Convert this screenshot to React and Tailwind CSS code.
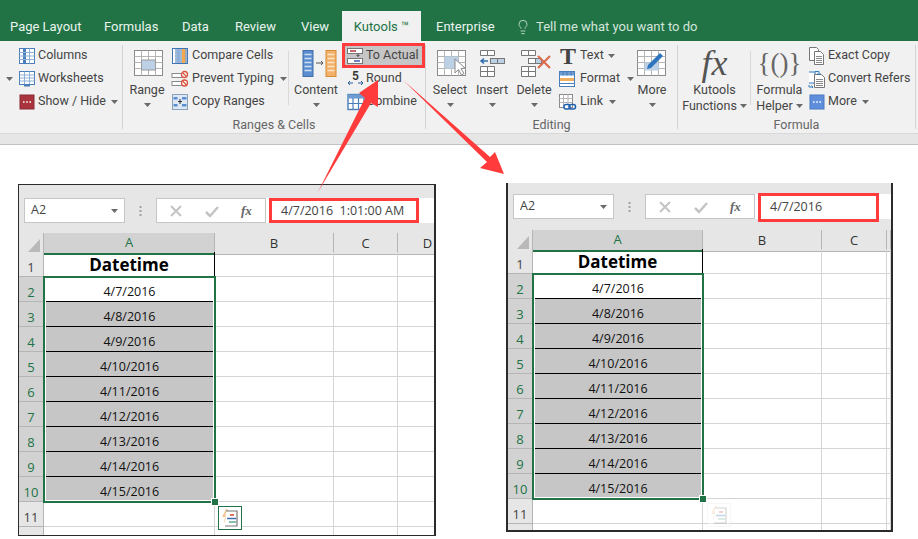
import { Lightbulb } from "lucide-react"

const ROWS = ["4/7/2016", "4/8/2016", "4/9/2016", "4/10/2016", "4/11/2016", "4/12/2016", "4/13/2016", "4/14/2016", "4/15/2016"]

function Caret({ className = "" }) {
  return (
    <svg width="7" height="4" viewBox="0 0 7 4" className={className}>
      <polygon points="0,0 7,0 3.5,4" fill="#6a6a6a" />
    </svg>
  )
}

/* ribbon icons */
function Icon({ w = 18, h = 18, className = "", children }) {
  return (
    <svg width={w} height={h} viewBox={`0 0 ${w} ${h}`} className={`shrink-0 ${className}`}>
      {children}
    </svg>
  )
}

const ColumnsIcon = () => (
  <Icon>
    <rect x="1.5" y="1.5" width="15" height="15" fill="#fff" stroke="#4a7ebb" />
    <rect x="5" y="1.5" width="3" height="15" fill="#4a7ebb" />
    <path d="M1.5 5.5h15M1.5 9h15M1.5 12.5h15M11.5 1.5v15" stroke="#8fb0d8" />
  </Icon>
)
const WorksheetsIcon = () => (
  <Icon>
    <rect x="1.5" y="1.5" width="15" height="13" fill="#fff" stroke="#4a7ebb" />
    <path d="M1.5 5h15M1.5 8h15M1.5 11h15M6.5 1.5v13M11.5 1.5v13" stroke="#8fb0d8" />
    <rect x="6" y="14" width="6" height="2.5" fill="#4a7ebb" />
  </Icon>
)
const ShowHideIcon = () => (
  <Icon>
    <rect x="2" y="2" width="14" height="14" fill="#a9343e" stroke="#8a2a32" />
    <path d="M5 9h1.6M8.2 9h1.6M11.4 9H13" stroke="#fff" strokeWidth="1.6" />
  </Icon>
)
const CompareIcon = () => (
  <Icon>
    <rect x="1.5" y="1.5" width="15" height="15" fill="#fff" stroke="#3f75b5" />
    <rect x="6" y="2" width="3" height="14" fill="#8fb0d8" />
    <rect x="11" y="2" width="3.5" height="14" fill="#f0a94e" />
    <path d="M5 2v14M10 2v14M15 2v14" stroke="#3f75b5" />
  </Icon>
)
const PreventIcon = () => (
  <Icon>
    <rect x="1" y="3.5" width="10" height="4" fill="#fff" stroke="#8a8a8a" />
    <rect x="1" y="11.5" width="10" height="4" fill="#fff" stroke="#8a8a8a" />
    <circle cx="13.5" cy="4.5" r="3" fill="#fff" stroke="#d8553f" strokeWidth="1.3" />
    <circle cx="13.5" cy="13" r="3" fill="#fff" stroke="#d8553f" strokeWidth="1.3" />
    <path d="M11.5 2.5l4 4M11.5 11l4 4" stroke="#d8553f" strokeWidth="1.3" />
  </Icon>
)
const CopyRangesIcon = () => (
  <Icon>
    <rect x="1.5" y="1.5" width="15" height="15" fill="#dde8f4" stroke="#8a9fb8" />
    <rect x="2.5" y="4" width="4" height="2.5" fill="#5b8ed0" />
    <rect x="2.5" y="11" width="4" height="2.5" fill="#5b8ed0" />
    <rect x="11" y="4" width="4.5" height="2.5" fill="#5b8ed0" />
    <rect x="11" y="11" width="4.5" height="2.5" fill="#5b8ed0" />
    <path d="M7 8.5h4M9 6v5" stroke="#333" />
  </Icon>
)
const ToActualIcon = () => (
  <Icon w={16} h={18}>
    <rect x="0.5" y="1.5" width="15" height="5" fill="#fff" stroke="#777" />
    <path d="M3 4h6" stroke="#b3282d" strokeWidth="1.4" />
    <rect x="0.5" y="11.5" width="15" height="5" fill="#fff" stroke="#777" />
    <path d="M7 14h6" stroke="#2b4fa8" strokeWidth="1.4" />
    <path d="M11 10V7.8M9.5 9l1.500-1.500L12.500 9" stroke="#444" fill="none" />
  </Icon>
)
const RoundIcon = () => (
  <div className="relative w-[17px] h-[18px] shrink-0">
    <span className="absolute left-[5px] -top-[3px] text-[12px] font-semibold text-[#333]">5</span>
    <svg width="17" height="18" viewBox="0 0 17 18" className="absolute inset-0">
      <path d="M1 13h5M11 13h5M3 11l-2 2 2 2M14 11l2 2-2 2" stroke="#2d5f9e" fill="none" />
    </svg>
  </div>
)
const CombineIcon = () => (
  <Icon>
    <rect x="1" y="1.500" width="16" height="15" fill="#fff" stroke="#4a7ebb" strokeWidth="1.400" />
    <rect x="1" y="1.500" width="16" height="4" fill="#6f9bd1" />
    <path d="M6 5v11M11.500 5v11M1 10.500h16" stroke="#4a7ebb" strokeWidth="1.200" />
  </Icon>
)
const TableBase = ({ className, children }) => (
  <Icon w={30} h={27} className={className}>
    <rect x="0.5" y="0.5" width="28" height="25" fill="#fff" stroke="#8a8a8a" />
    <path d="M.5 6.500h28M.5 12.500h28M.5 18.500h28M7.500.5v25M14.500.5v25M21.500.5v25" stroke="#b5b5b5" />
    {children}
  </Icon>
)
const RangeIcon = () => (
  <TableBase className="ml-[4px]">
    <rect x="7.500" y="10" width="14" height="10" fill="#bcd0e6" stroke="#9a9a9a" />
  </TableBase>
)
const SelectIcon = () => (
  <TableBase className="ml-[3px]">
    <rect x="7.500" y="6.500" width="14" height="12" fill="#bcd0e6" />
    <path d="M18 9l0 14 3.500-3.500 3 5.500 2.500-1.500-3-5 4-.5z" fill="#fff" stroke="#8a8a8a" />
  </TableBase>
)
const MoreTableIcon = () => (
  <TableBase>
    <rect x="7.500" y="12.500" width="14" height="8" fill="#bcd0e6" />
    <path d="M10 19l1-4 12-12 3 3-12 12z" fill="#2f75bd" />
  </TableBase>
)
const ContentIcon = () => (
  <Icon w={35} h={27} className="ml-[6px]">
    <rect x="1" y="0.500" width="10" height="26" fill="#5b8ed0" stroke="#3f6fa8" />
    <path d="M2.500 4.500h7M2.500 8.500h7M2.500 12.500h7M2.500 16.500h7M2.500 20.500h7" stroke="#cfe0f3" strokeWidth="1.300" />
    <rect x="24" y="0.500" width="10" height="26" fill="#f3b26b" stroke="#d98a35" />
    <path d="M25.500 4.500h7M25.500 8.500h7M25.500 12.500h7M25.500 16.500h7M25.500 20.500h7" stroke="#fbe3c6" strokeWidth="1.300" />
    <path d="M14 13h7M19 11l2 2-2 2" stroke="#555" fill="none" />
  </Icon>
)
const InsertIcon = () => (
  <Icon w={27} h={27}>
    <path d="M1.500.5h7v5h-7zM8.500.5h7v5h-7zM1.500 16.500h7v5h-7zM8.500 16.500h7v5h-7zM1.500 21.500h7v5h-7zM8.500 21.500h7v5h-7z" fill="#fff" stroke="#777" />
    <rect x="11.500" y="8.500" width="7" height="5" fill="#bcd0e6" stroke="#777" />
    <rect x="18.500" y="8.500" width="7" height="5" fill="#bcd0e6" stroke="#777" />
    <path d="M2 11h7M5 8.500L2 11l3 2.500" stroke="#2f6db0" strokeWidth="1.500" fill="none" />
  </Icon>
)
const DeleteIcon = () => (
  <Icon w={31} h={27} className="ml-[4px]">
    <path d="M.5.5h7v5h-7zM7.500.5h7v5h-7zM.5 16.500h7v5h-7zM7.500 16.500h7v5h-7zM.5 21.500h7v5h-7zM7.500 21.500h7v5h-7z" fill="#fff" stroke="#777" />
    <rect x="7.500" y="8.500" width="7" height="5" fill="#fff" stroke="#777" />
    <rect x="14.500" y="8.500" width="6" height="5" fill="#bcd0e6" stroke="#777" />
    <path d="M17 6l12 12M29 6L17 18" stroke="#d9694a" strokeWidth="2" />
  </Icon>
)
const FormatIcon = () => (
  <Icon w={17} h={18}>
    <rect x="0.500" y="1.500" width="15" height="15" fill="#fff" stroke="#4a7ebb" />
    <rect x="1" y="2" width="14" height="3.500" fill="#6f9bd1" />
    <rect x="1" y="8" width="14" height="3" fill="#f0b060" />
    <path d="M4 2v3.500M8 2v3.500M12 2v3.500M1 13.500h14" stroke="#4a7ebb" />
  </Icon>
)
const LinkIcon = () => (
  <Icon>
    <rect x="0.500" y="1.500" width="13" height="13" fill="#fff" stroke="#8a8a8a" />
    <path d="M.5 5.500h13M.5 9.500h13M4.500 1.500v13M9 1.500v13" stroke="#b5b5b5" />
    <rect x="5" y="11.500" width="6" height="4.500" rx="2" fill="#fff" stroke="#1f5fae" strokeWidth="1.500" />
    <rect x="10" y="11.500" width="6.500" height="4.500" rx="2" fill="none" stroke="#1f5fae" strokeWidth="1.500" />
  </Icon>
)
const ExactCopyIcon = () => (
  <Icon>
    <path d="M1.500.5h7l2 2v11h-9z" fill="#fff" stroke="#777" />
    <path d="M6.500 4.500h6l3 3v10h-9z" fill="#fff" stroke="#777" />
    <path d="M8 9.500h6M8 11.500h6M8 13.500h6M8 15.500h6" stroke="#888" />
  </Icon>
)
const ConvertIcon = () => (
  <Icon w={18} h={18}>
    <path d="M1 2h6v11H1" fill="#fff" stroke="#2f7bc4" />
    <path d="M6.500 4.500h7l3 3v10h-10z" fill="#fff" stroke="#777" />
    <path d="M8 9.500h7M8 11.500h7M8 13.500h7M8 15.500h7" stroke="#888" />
    <path d="M7 1.500h4v3M9.500 3.500l1.500 1.500 1.500-1.500M1 15v2h4M3.500 15.500L5 17l-1.500 1.500" stroke="#2f7bc4" fill="none" />
  </Icon>
)
const BlueMoreIcon = () => (
  <Icon>
    <rect x="2" y="2" width="14" height="14" fill="#5f8fdc" stroke="#4a78c4" />
    <path d="M5 9h1.600M8.200 9h1.600M11.400 9H13" stroke="#fff" strokeWidth="1.500" />
  </Icon>
)

function Small({ icon, label, caret, pad = "gap-[3px]" }) {
  return (
    <div className={`h-[23px] flex items-center whitespace-nowrap ${pad}`}>
      {icon}
      <span>{label}</span>
      {caret && <Caret className="ml-[3px]" />}
    </div>
  )
}

function Big({ icon, lines, className = "", inlineCaret }) {
  return (
    <div className={`flex flex-col items-center shrink-0 ${className}`}>
      <div className="h-[38px] flex items-center justify-center">{icon}</div>
      {lines.map((l, i) => (
        <div key={l} className="h-[16px] leading-[16px] whitespace-nowrap flex items-center">
          {l}
          {inlineCaret && i === lines.length - 1 && <Caret className="ml-[3px]" />}
        </div>
      ))}
      {!inlineCaret && (
        <div className="h-[14px] flex items-center">
          <Caret />
        </div>
      )}
    </div>
  )
}

function Group({ width, label, children }) {
  return (
    <div className={`shrink-0 h-full flex ${width}`}>
      <div className="flex-1 min-w-0 flex flex-col">
        <div className="flex flex-1 pt-[3px]">{children}</div>
        {label && <div className="h-[17px] pt-[1px] leading-[16px] text-center text-[#666]">{label}</div>}
      </div>
      <div className="w-px my-[4px] bg-[#d4d4d4]" />
    </div>
  )
}

function Ribbon() {
  return (
    <div className="font-['Roboto',sans-serif] text-[12.500px] text-[#444]">
      <div className="h-[41px] bg-[#217346] flex items-end pl-[10px] text-[13px] text-[#eaf3ee] leading-[18px]">
        <div className="pb-[5px] w-[94px]">Page Layout</div>
        <div className="pb-[5px] w-[78px]">Formulas</div>
        <div className="pb-[5px] w-[53px]">Data</div>
        <div className="pb-[5px] w-[66px]">Review</div>
        <div className="pb-[5px] w-[41px]">View</div>
        <div className="h-[30px] w-[79px] bg-[#f1f1f1] text-[#217346] flex items-center justify-center pt-[2px]">Kutools ™</div>
        <div className="pb-[5px] w-[80px] pl-[15px]">Enterprise</div>
        <div className="pb-[5px] flex items-center gap-[5px] pl-[14px] text-[#d3e5da]">
          <Lightbulb size={16} strokeWidth={1.25} />
          <span>Tell me what you want to do</span>
        </div>
      </div>

      <div className="h-[92px] bg-[#f1f1f1] flex">
        <Group width="w-[123px]">
          <div className="pl-[6px] w-[13px] pt-[33px]">
            <Caret />
          </div>
          <div className="ml-[5px]">
            <Small icon={<ColumnsIcon />} label="Columns" pad="gap-[2px]" />
            <Small icon={<WorksheetsIcon />} label="Worksheets" pad="gap-[2px]" />
            <Small icon={<ShowHideIcon />} label="Show / Hide" caret pad="gap-[2px]" />
          </div>
        </Group>

        <Group width="w-[303px]" label="Ranges & Cells">
          <Big icon={<RangeIcon />} lines={["Range"]} className="w-[48px]" />
          <div className="w-[117px]">
            <Small icon={<CompareIcon />} label="Compare Cells" />
            <Small icon={<PreventIcon />} label="Prevent Typing" caret />
            <Small icon={<CopyRangesIcon />} label="Copy Ranges" />
          </div>
          <div className="w-px h-[54px] bg-[#d9d9d9] mt-[7px]" />
          <Big icon={<ContentIcon />} lines={["Content"]} className="w-[52px] ml-[1px]" />
          <div>
            <div className="h-[25px] w-[83px] -mt-[1px] -mb-[1px] border-[3px] border-[#ff3b3b] bg-[#c6c6c6] flex items-center gap-[3px] pl-[2px] whitespace-nowrap">
              <ToActualIcon />
              <span>To Actual</span>
            </div>
            <div className="pl-[5px]">
              <Small icon={<RoundIcon />} label="Round" pad="gap-[2px]" />
              <Small icon={<CombineIcon />} label="Combine" pad="gap-[2px]" />
            </div>
          </div>
        </Group>

        <Group width="w-[252px]" label="Editing">
          <Big icon={<SelectIcon />} lines={["Select"]} className="w-[48px]" />
          <Big icon={<InsertIcon />} lines={["Insert"]} className="w-[36px]" />
          <Big icon={<DeleteIcon />} lines={["Delete"]} className="w-[42px] ml-[3px]" />
          <div className="w-[78px] ml-[4px]">
            <div className="h-[23px] flex items-center gap-[3px]">
              <span className="w-[18px] text-center text-[24px] leading-[20px] font-bold text-[#444] font-['Liberation_Serif',serif]">T</span>
              <span>Text</span>
              <Caret className="ml-[1px]" />
            </div>
            <Small icon={<FormatIcon />} label="Format" caret pad="gap-[4px]" />
            <Small icon={<LinkIcon />} label="Link" caret />
          </div>
          <Big icon={<MoreTableIcon />} lines={["More"]} className="w-[30px]" />
        </Group>

        <Group width="w-[238px]" label="Formula">
          <Big
            icon={<span className="font-['Liberation_Serif',serif] italic text-[36px] leading-[38px] text-[#555]">fx</span>}
            lines={["Kutools", "Functions"]}
            inlineCaret
            className="w-[71px] ml-[1px]"
          />
          <div className="w-px h-[54px] bg-[#d9d9d9] mt-[7px]" />
          <Big
            icon={<span className="font-['Liberation_Serif',serif] text-[27px] leading-[38px] text-[#666]">{"{()}"}</span>}
            lines={["Formula", "Helper"]}
            inlineCaret
            className="w-[53px] ml-[2px]"
          />
          <div className="ml-[2px]">
            <Small icon={<ExactCopyIcon />} label="Exact Copy" pad="gap-[2px]" />
            <Small icon={<ConvertIcon />} label="Convert Refers" pad="gap-[2px]" />
            <Small icon={<BlueMoreIcon />} label="More" caret pad="gap-[2px]" />
          </div>
        </Group>
      </div>
      <div className="h-[12px] bg-[#e6e6e6] border-t border-[#d9d9d9] border-b border-b-[#c2c2c2]" />
    </div>
  )
}

function RowHeader({ n, active }) {
  return (
    <div
      className={`flex items-center justify-center border-r border-b border-[#b5b5b5] text-[13px] leading-[14px] pt-[6px] ${
        active ? "bg-[#d2d2d2] text-[#217346]" : "bg-[#e6e6e6] text-[#444]"
      }`}
    >
      {n}
    </div>
  )
}

function Sheet({ frame, bar, cols, headers, formula, formulaBox, name = "A2", floater, overlayW }) {
  return (
    <div className={`absolute bg-white overflow-hidden font-['Open_Sans',sans-serif] ${frame}`}>
      {/* name box and formula bar */}
      <div className={`bg-[#e6e6e6] flex text-[12.500px] text-[#444] ${bar}`}>
        <div className="w-[101px] h-[25px] bg-white border border-[#c6c6c6] flex items-center justify-between pl-[6px] pr-[6px]">
          <span>{name}</span>
          <Caret />
        </div>
        <div className="w-[31px] h-[25px] flex items-center justify-center">
          <svg width="3" height="12" viewBox="0 0 3 12">
            <path d="M1.500 1v2M1.500 5v2M1.500 9v2" stroke="#a0a0a0" strokeWidth="2" />
          </svg>
        </div>
        <div className="w-[110px] h-[25px] bg-white border border-[#c6c6c6] flex items-center">
          <svg width="14" height="14" viewBox="0 0 14 14" className="ml-[12px]">
            <path d="M2 2l10 10M12 2L2 12" stroke="#c4c4c4" strokeWidth="2" />
          </svg>
          <svg width="14" height="14" viewBox="0 0 14 14" className="ml-[22px]">
            <path d="M1 8l4 4 8-9" stroke="#c4c4c4" strokeWidth="2.500" fill="none" />
          </svg>
          <span className="ml-[22px] font-['Liberation_Serif',serif] italic font-bold text-[13px] text-[#666]">fx</span>
        </div>
        <div className="relative flex-1 h-[25px] bg-white flex items-center pl-[15px] pt-[1px] whitespace-pre">
          {formula}
          <div className={`absolute border-[3px] border-[#ff3b3b] ${formulaBox}`} />
        </div>
      </div>

      <div className="relative">
        {/* header row */}
        <div className={`grid h-[19px] text-[13px] text-[#333] ${cols}`}>
          <div className="bg-[#e6e6e6] border-r border-b border-[#b5b5b5] flex items-end justify-end pr-[3px] pb-[2px]">
            <svg width="12" height="13" viewBox="0 0 12 13">
              <polygon points="12,0 12,13 0,13" fill="#b9b9b9" />
            </svg>
          </div>
          <div className="bg-[#d2d2d2] text-[#217346] border-b-2 border-[#217346] border-r border-r-[#b5b5b5] flex items-center justify-center">A</div>
          {headers.map((h, i) => (
            <div key={i} className="bg-[#e6e6e6] border-r border-b border-[#b5b5b5] flex items-center justify-center overflow-hidden">
              {h}
            </div>
          ))}
        </div>

        {/* row 1 */}
        <div className={`grid h-[25px] ${cols}`}>
          <RowHeader n="1" />
          <div className="border-r border-b border-black flex items-center justify-center text-[17px] leading-[20px] font-bold text-black pt-[2px]">Datetime</div>
          {headers.map((h, i) => (
            <div key={i} className="border-r border-b border-[#d4d4d4]" />
          ))}
        </div>

        {/* data rows */}
        {ROWS.map((d, r) => (
          <div key={d} className={`grid h-[25px] ${cols}`}>
            <RowHeader n={r + 2} active />
            <div className={`border-b border-black flex items-end justify-center text-[12.500px] leading-[14px] text-[#111] pb-[2px] ${r === 0 ? "bg-white" : "bg-[#c6c6c6]"}`}>{d}</div>
            {headers.map((h, i) => (
              <div key={i} className="border-r border-b border-[#d4d4d4]" />
            ))}
          </div>
        ))}

        {/* rows below the data */}
        {["11", ""].map((n) => (
          <div key={n} className={`grid h-[25px] ${cols}`}>
            <RowHeader n={n} />
            <div className="border-r border-b border-[#d4d4d4]" />
            {headers.map((h, i) => (
              <div key={i} className="border-r border-b border-[#d4d4d4]" />
            ))}
          </div>
        ))}

        {/* selection */}
        <div className={`absolute left-[24px] top-[43px] h-[227px] border-2 border-[#217346] shadow-[inset_0_0_0_1px_#fff] ${overlayW}`}>
          <div className="absolute -right-[4px] -bottom-[4px] w-[6px] h-[6px] bg-[#217346] outline outline-1 outline-white" />
        </div>
        {floater}
      </div>
    </div>
  )
}

function PasteBadge({ faint }) {
  return (
    <div className={`absolute left-[199px] top-[273px] w-[24px] h-[24px] bg-white border flex items-center justify-center ${faint ? "border-[#dfe9e3] opacity-30" : "border-[#217346]"}`}>
      <svg width="20" height="20" viewBox="0 0 20 20">
        <path d="M6 1L2 9h3l-1 6 5-8H6l2-6z" fill="#f5c89a" />
        <path d="M6 3h11v15H5" fill="#fff" stroke="#777" strokeWidth="1.200" />
        <path d="M10 7h4" stroke="#d0452f" strokeWidth="1.500" />
        <path d="M7 10.500h9" stroke="#3d6fb4" strokeWidth="1.500" />
        <path d="M9 14h7" stroke="#5fa98f" strokeWidth="1.500" />
      </svg>
    </div>
  )
}

function Arrows() {
  return (
    <svg width="918" height="539" viewBox="0 0 918 539" className="absolute inset-0 pointer-events-none">
      <polygon points="318,192 365,98 359,93 378,80 378,107 371,103" fill="#ff3b3b" />
      <polygon points="403,80 490,157 495,152 504,174 480,168 487,162" fill="#ff3b3b" />
    </svg>
  )
}

export default function App() {
  return (
    <div className="relative w-[918px] h-[539px] bg-white overflow-hidden">
      <Ribbon />
      <Sheet
        frame="left-[18px] top-[184px] w-[418px] h-[352px] border-t border-l border-r-2 border-b border-[#2b2b2b]"
        bar="h-[48px] pt-[13px] pl-[5px]"
        cols="grid-cols-[25px_171px_119px_64px_60px]"
        headers={["B", "C", "D"]}
        formula="4/7/2016  1:01:00 AM"
        formulaBox="left-[3px] top-0 w-[150px] h-[25px]"
        overlayW="w-[173px]"
        floater={<PasteBadge />}
      />
      <Sheet
        frame="left-[506px] top-[183px] w-[387px] h-[349px] border-l-2 border-r-2 border-b-2 border-[#2b2b2b]"
        bar="h-[47px] pt-[11px] pl-[5px]"
        cols="grid-cols-[25px_170px_119px_65px_4px]"
        headers={["B", "C", ""]}
        formula="4/7/2016"
        formulaBox="left-[3px] -top-[1px] w-[121px] h-[29px]"
        overlayW="w-[172px]"
        floater={<PasteBadge faint />}
      />
      <Arrows />
    </div>
  )
}
